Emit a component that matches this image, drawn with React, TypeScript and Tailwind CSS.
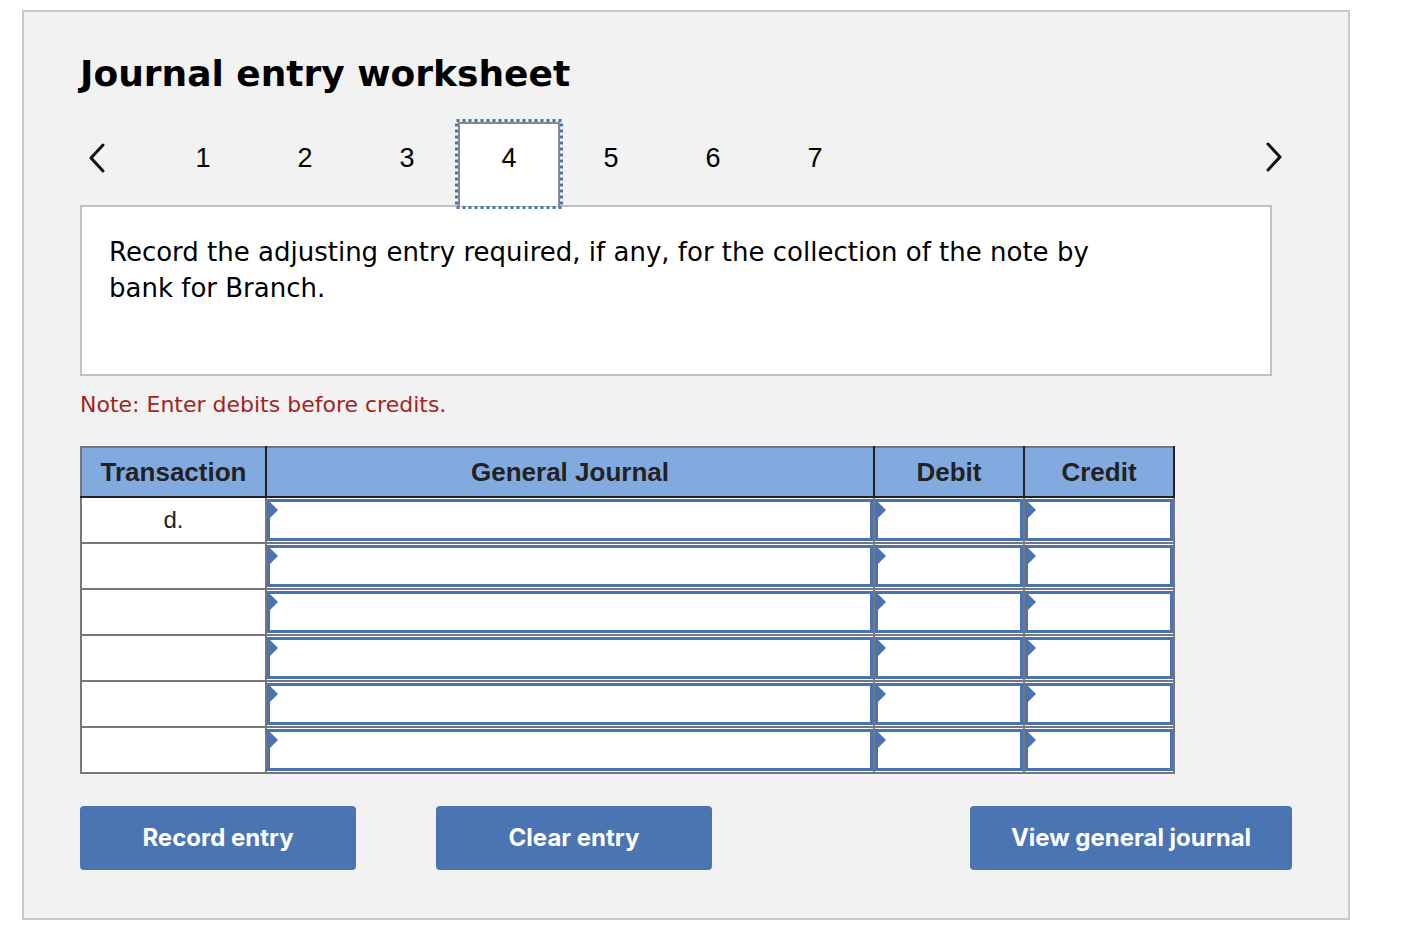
import React from 'react';

const steps = [1, 2, 3, 4, 5, 6, 7];
const active = 4;
const rows = ['d.', '', '', '', '', ''];

const Marker = () => (
  <span className="absolute left-0 top-0 h-0 w-0 border-y-[8px] border-l-[8px] border-y-transparent border-l-[#4a73b0]" />
);

const InputCell = () => (
  <td className="border-2 border-[#777] bg-white p-0">
    <div className="relative h-[42px] border-[3px] border-[#4a73b0] bg-white">
      <Marker />
    </div>
  </td>
);

const App: React.FC = () => {
  return (
    <div className="min-h-screen bg-white pl-[22px] pt-[10px]">
      <div className="h-[910px] w-[1328px] border-2 border-[#c8c8c8] bg-[#f2f2f2] pl-[56px] pr-[76px] pt-[40px]">
        <h1 className="font-['DejaVu_Sans',sans-serif] text-[36px] font-bold leading-[44px] text-black">
          Journal entry worksheet
        </h1>

        <div className="relative mt-[25px] flex h-[84px] items-center">
          <button className="flex w-[72px] justify-start pl-[8px] pb-[10px]">
            <svg width="18" height="30" viewBox="0 0 18 30" fill="none" stroke="#111" strokeWidth="3" strokeLinecap="round" strokeLinejoin="round">
              <path d="M15 2 L3 15 L15 28" />
            </svg>
          </button>
          <div className="flex">
            {steps.map((n) =>
              n === active ? (
                <div key={n} className="relative z-10 -mx-[3px] mb-[-12px] mt-[-2px] h-[90px] w-[108px]">
                  <svg className="absolute inset-0" width="108" height="90" fill="none">
                    <rect x="1.5" y="1.5" width="105" height="87" stroke="#4a73b0" strokeWidth="3" strokeDasharray="3 3" />
                  </svg>
                  <div className="absolute inset-[3px] flex items-center justify-center border-2 border-b-0 border-[#888] bg-white pb-[14px] font-['Liberation_Sans',sans-serif] text-[27px] text-black">
                    {n}
                  </div>
                </div>
              ) : (
                <div
                  key={n}
                  className="flex h-[84px] w-[102px] items-center justify-center pb-[10px] font-['Liberation_Sans',sans-serif] text-[27px] text-black"
                >
                  {n}
                </div>
              )
            )}
          </div>
          <button className="ml-auto mr-[-17px] flex w-[30px] justify-center pb-[12px]">
            <svg width="18" height="30" viewBox="0 0 18 30" fill="none" stroke="#111" strokeWidth="3" strokeLinecap="round" strokeLinejoin="round">
              <path d="M3 2 L15 15 L3 28" />
            </svg>
          </button>
        </div>

        <div className="h-[171px] w-[1192px] border-2 border-[#c0c0c0] bg-white px-[27px] pt-[27px]">
          <p className="w-[1010px] font-['DejaVu_Sans',sans-serif] text-[26px] leading-[36px] text-black">
            Record the adjusting entry required, if any, for the collection of the note by bank for Branch.
          </p>
        </div>

        <p className="mt-[15px] font-['DejaVu_Sans',sans-serif] text-[22px] leading-[28px] text-[#a3231d]">
          Note: Enter debits before credits.
        </p>

        <table className="mt-[27px] w-[1093px] table-fixed border-collapse">
          <colgroup>
            <col className="w-[185px]" />
            <col className="w-[608px]" />
            <col className="w-[150px]" />
            <col className="w-[150px]" />
          </colgroup>
          <thead>
            <tr className="h-[50px] bg-[#82aadf] font-['Liberation_Sans',sans-serif] text-[26px] font-bold text-[#222]">
              <th className="border-2 border-[#777] border-b-[#222] border-r-[#222]">Transaction</th>
              <th className="border-2 border-[#777] border-b-[#222] border-r-[#222]">General Journal</th>
              <th className="border-2 border-[#777] border-b-[#222] border-r-[#222]">Debit</th>
              <th className="border-2 border-[#777] border-b-[#222] border-r-[#222]">Credit</th>
            </tr>
          </thead>
          <tbody>
            {rows.map((t, i) => (
              <tr key={i} className="h-[46px]">
                <td className="border-2 border-[#777] bg-white text-center align-middle font-['Liberation_Sans',sans-serif] text-[24px] text-[#222]">
                  {t}
                </td>
                <InputCell />
                <InputCell />
                <InputCell />
              </tr>
            ))}
          </tbody>
        </table>

        <div className="mt-[32px] flex w-[1212px] items-center font-['Inter',sans-serif] text-[24px] font-bold text-white">
          <button className="h-[64px] w-[276px] rounded-[4px] bg-[#4a74b2]">Record entry</button>
          <button className="ml-[80px] h-[64px] w-[276px] rounded-[4px] bg-[#4a74b2]">Clear entry</button>
          <button className="ml-auto h-[64px] w-[322px] rounded-[4px] bg-[#4a74b2]">View general journal</button>
        </div>
      </div>
    </div>
  );
};

export default App;
